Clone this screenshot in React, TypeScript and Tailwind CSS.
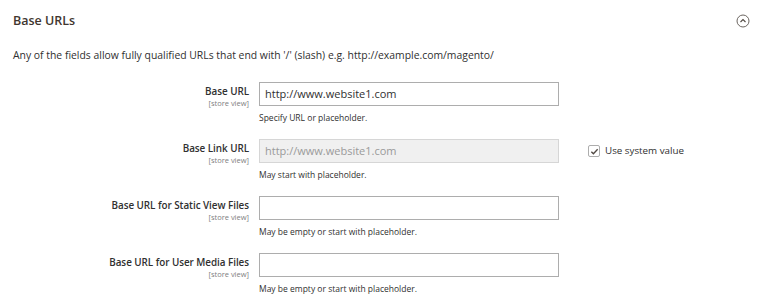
import React from 'react';

interface FieldRowProps {
  label: string;
  value?: string;
  note: string;
  disabled?: boolean;
  useSystem?: boolean;
}

const FieldRow = ({ label, value = '', note, disabled, useSystem }: FieldRowProps) => (
  <div className="flex mb-[14px]">
    <div className="w-[249px] shrink-0 text-right pt-[2px]">
      <div className="text-[9.9px] font-semibold text-[#303030] leading-[14px] tracking-[-0.05px]">{label}</div>
      <div className="text-[7.5px] text-[#808080] leading-[10px]">[store view]</div>
    </div>
    <div className="ml-[10px] w-[300px] shrink-0">
      <div
        className={`h-[24px] border px-[5px] flex items-center text-[11px] ${
          disabled
            ? 'bg-[#f0f0f0] border-[#d6d6d6] text-[#9a9a9a]'
            : 'bg-white border-[#adadad] text-[#303030]'
        }`}
      >
        {value}
      </div>
      <div className="text-[8.5px] text-[#303030] leading-[14px] mt-[5px]">{note}</div>
    </div>
    {useSystem && (
      <div className="ml-[29px] h-[24px] flex items-center gap-[5px]">
        <span className="w-[12px] h-[12px] border border-[#adadad] rounded-[2px] flex items-center justify-center bg-white">
          <svg width="9" height="9" viewBox="0 0 10 10" fill="none">
            <path d="M1.5 5.2l2.3 2.3L8.5 2.5" stroke="#514943" strokeWidth="1.5" />
          </svg>
        </span>
        <span className="text-[9.8px] text-[#303030]">Use system value</span>
      </div>
    )}
  </div>
);

export default function App() {
  return (
    <div className="w-[768px] h-[304px] bg-white overflow-hidden font-['Open_Sans',sans-serif]">
      <div className="flex items-center justify-between pl-[13px] pr-[18px] pt-[11px] h-[30px]">
        <h2 className="text-[12.5px] font-semibold text-[#41362f] leading-[18px]">Base URLs</h2>
        <svg width="14" height="14" viewBox="0 0 14 14" fill="none">
          <circle cx="7" cy="7" r="6" stroke="#6b6560" strokeWidth="1" />
          <path d="M4.5 8l2.5-2.5L9.5 8" stroke="#514943" strokeWidth="1.1" />
        </svg>
      </div>
      <p className="pl-[13px] mt-[18px] text-[10.4px] text-[#303030] leading-[14px]">
        Any of the fields allow fully qualified URLs that end with '/' (slash) e.g. http://example.com/magento/
      </p>
      <div className="mt-[20px]">
        <FieldRow label="Base URL" value="http://www.website1.com" note="Specify URL or placeholder." />
        <FieldRow
          label="Base Link URL"
          value="http://www.website1.com"
          note="May start with placeholder."
          disabled
          useSystem
        />
        <FieldRow label="Base URL for Static View Files" note="May be empty or start with placeholder." />
        <FieldRow label="Base URL for User Media Files" note="May be empty or start with placeholder." />
      </div>
    </div>
  );
}
